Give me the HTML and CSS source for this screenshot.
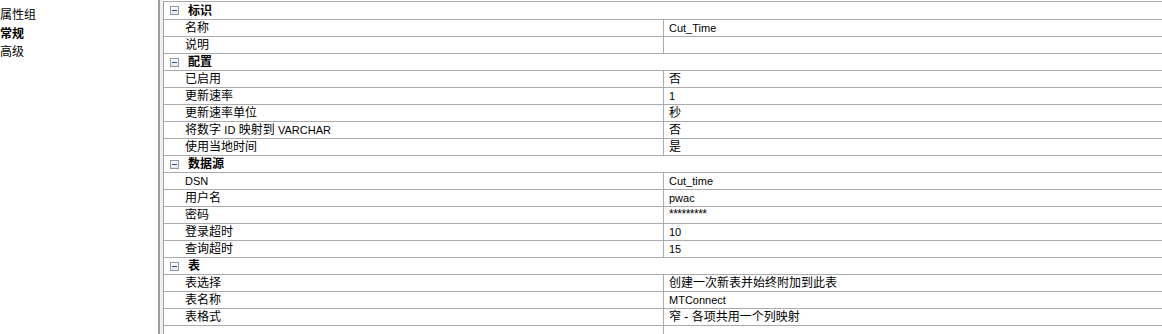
FILE: index.html
```html
<!DOCTYPE html>
<html lang="zh">
<head>
<meta charset="utf-8">
<title>属性</title>
<link rel="stylesheet" href="styles.css">
</head>
<body>
<div class="app">
  <div class="groups">
    <div class="group">属性组</div>
    <div class="group active">常规</div>
    <div class="group">高级</div>
  </div>
  <div class="splitter"></div>
  <div class="grid">
    <div class="cat first"><span class="toggle"></span>标识</div>
    <div class="row"><div class="name">名称</div><div class="val en">Cut_Time</div></div>
    <div class="row"><div class="name">说明</div><div class="val"></div></div>
    <div class="cat"><span class="toggle"></span>配置</div>
    <div class="row"><div class="name">已启用</div><div class="val">否</div></div>
    <div class="row"><div class="name">更新速率</div><div class="val en">1</div></div>
    <div class="row"><div class="name">更新速率单位</div><div class="val">秒</div></div>
    <div class="row"><div class="name">将数字 <span class="en">ID</span> 映射到 <span class="en">VARCHAR</span></div><div class="val">否</div></div>
    <div class="row"><div class="name">使用当地时间</div><div class="val">是</div></div>
    <div class="cat"><span class="toggle"></span>数据源</div>
    <div class="row"><div class="name en">DSN</div><div class="val en">Cut_time</div></div>
    <div class="row"><div class="name">用户名</div><div class="val en">pwac</div></div>
    <div class="row"><div class="name">密码</div><div class="val pw">*********</div></div>
    <div class="row"><div class="name">登录超时</div><div class="val en">10</div></div>
    <div class="row"><div class="name">查询超时</div><div class="val en">15</div></div>
    <div class="cat"><span class="toggle"></span>表</div>
    <div class="row"><div class="name">表选择</div><div class="val">创建一次新表并始终附加到此表</div></div>
    <div class="row"><div class="name">表名称</div><div class="val en">MTConnect</div></div>
    <div class="row"><div class="name">表格式</div><div class="val">窄 - 各项共用一个列映射</div></div>
    <div class="row tail"><div class="name"></div><div class="val"></div></div>
  </div>
</div>
</body>
</html>
```

FILE: styles.css
```css
html, body {
  margin: 0;
  padding: 0;
  background: #ffffff;
}

body {
  width: 1162px;
  height: 334px;
  overflow: hidden;
  font-family: "Liberation Sans", "Noto Sans CJK SC", sans-serif;
  font-size: 12px;
  color: #000000;
}

.app {
  display: flex;
  height: 334px;
}

.groups {
  width: 160px;
  flex: none;
  box-sizing: border-box;
  border-right: 2px solid #9c9c9c;
  padding-top: 6px;
  background: #ffffff;
}

.group {
  height: 18px;
  line-height: 18px;
  white-space: nowrap;
}

.group.active {
  font-weight: bold;
  height: 19px;
  line-height: 21px;
}

.splitter {
  width: 3px;
  flex: none;
  background: #f0f0f0;
}

.grid {
  flex: 1;
  border-left: 1px solid #a0a0a0;
  margin-top: 1px;
  border-top: 1px solid #ababab;
  display: flex;
  flex-direction: column;
  background: #ffffff;
}

.cat {
  height: 16px;
  line-height: 16px;
  border-bottom: 1px solid #ababab;
  font-weight: bold;
  display: flex;
  align-items: center;
  padding-left: 6px;
  white-space: nowrap;
}

.cat.first {
  height: 17px;
}

.toggle {
  width: 7px;
  height: 7px;
  border: 1px solid #8f9aa8;
  background: linear-gradient(#ffffff, #e4e8ee);
  margin-right: 9px;
  position: relative;
  flex: none;
}

.toggle::after {
  content: "";
  position: absolute;
  left: 1px;
  right: 1px;
  top: 3px;
  height: 1px;
  background: #2a4d8f;
}

.row {
  display: grid;
  grid-template-columns: 500px 1fr;
  height: 16px;
  line-height: 16px;
  border-bottom: 1px solid #ababab;
  white-space: nowrap;
}

.row.tail {
  flex: 1;
  border-bottom: none;
}

.name {
  box-sizing: border-box;
  border-right: 1px solid #ababab;
  padding-left: 21px;
  overflow: hidden;
}

.val {
  padding-left: 5px;
  overflow: hidden;
}

.en {
  font-size: 11px;
}

.pw {
  font-size: 12px;
  line-height: 15px;
  letter-spacing: -0.5px;
}
```
